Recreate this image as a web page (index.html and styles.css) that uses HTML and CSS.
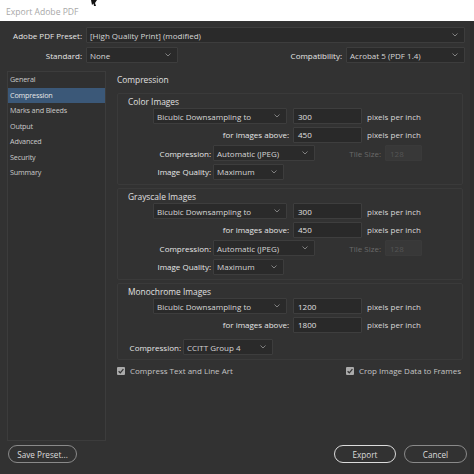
FILE: index.html
```html
<!DOCTYPE html>
<html>
<head>
<meta charset="utf-8">
<link rel="stylesheet" href="styles.css">
</head>
<body>
<div class="titlebar">
  <span class="title">Export Adobe PDF</span>
  <svg class="cursor" width="8" height="6" viewBox="0 0 8 6"><path d="M1 0 L7 0 L5 3 L6 6 L4 6 L3.5 3.5 L2 5 Z" fill="#111"/></svg>
</div>
<div class="dialog">
  <div class="toprow">
    <span class="lbl lbl-top">Adobe PDF Preset:</span>
    <div class="sel sel-grow"><span>[High Quality Print] (modified)</span><svg class="chev" width="6" height="4" viewBox="0 0 6 4"><polyline points="0.5,0.5 3,3 5.5,0.5" fill="none" stroke="#8a8a8a" stroke-width="0.9"/></svg></div>
  </div>
  <div class="toprow row2">
    <span class="lbl lbl-top">Standard:</span>
    <div class="sel w-std"><span>None</span><svg class="chev" width="6" height="4" viewBox="0 0 6 4"><polyline points="0.5,0.5 3,3 5.5,0.5" fill="none" stroke="#8a8a8a" stroke-width="0.9"/></svg></div>
    <span class="spacer"></span>
    <span class="lbl">Compatibility:</span>
    <div class="sel w-compat"><span>Acrobat 5 (PDF 1.4)</span><svg class="chev" width="6" height="4" viewBox="0 0 6 4"><polyline points="0.5,0.5 3,3 5.5,0.5" fill="none" stroke="#8a8a8a" stroke-width="0.9"/></svg></div>
  </div>

  <div class="main">
    <ul class="nav">
      <li>General</li>
      <li class="active">Compression</li>
      <li>Marks and Bleeds</li>
      <li>Output</li>
      <li>Advanced</li>
      <li>Security</li>
      <li>Summary</li>
    </ul>
    <div class="content">
      <div class="heading">Compression</div>

      <div class="group">
        <div class="glabel">Color Images</div>
        <div class="frow">
          <div class="sel w-samp ml-samp"><span>Bicubic Downsampling to</span><svg class="chev" width="6" height="4" viewBox="0 0 6 4"><polyline points="0.5,0.5 3,3 5.5,0.5" fill="none" stroke="#8a8a8a" stroke-width="0.9"/></svg></div>
          <div class="inp g6">300</div>
          <span class="unit">pixels per inch</span>
        </div>
        <div class="frow">
          <span class="lbl w-above">for images above:</span>
          <div class="inp">450</div>
          <span class="unit">pixels per inch</span>
        </div>
        <div class="frow">
          <span class="lbl w-lab">Compression:</span>
          <div class="sel w-comp g2"><span>Automatic (JPEG)</span><svg class="chev" width="6" height="4" viewBox="0 0 6 4"><polyline points="0.5,0.5 3,3 5.5,0.5" fill="none" stroke="#8a8a8a" stroke-width="0.9"/></svg></div>
          <span class="lbl dis w-tile">Tile Size:</span>
          <div class="inp inp-dis">128</div>
        </div>
        <div class="frow">
          <span class="lbl w-lab">Image Quality:</span>
          <div class="sel w-qual g2"><span>Maximum</span><svg class="chev" width="6" height="4" viewBox="0 0 6 4"><polyline points="0.5,0.5 3,3 5.5,0.5" fill="none" stroke="#8a8a8a" stroke-width="0.9"/></svg></div>
        </div>
      </div>

      <div class="group">
        <div class="glabel">Grayscale Images</div>
        <div class="frow">
          <div class="sel w-samp ml-samp"><span>Bicubic Downsampling to</span><svg class="chev" width="6" height="4" viewBox="0 0 6 4"><polyline points="0.5,0.5 3,3 5.5,0.5" fill="none" stroke="#8a8a8a" stroke-width="0.9"/></svg></div>
          <div class="inp g6">300</div>
          <span class="unit">pixels per inch</span>
        </div>
        <div class="frow">
          <span class="lbl w-above">for images above:</span>
          <div class="inp">450</div>
          <span class="unit">pixels per inch</span>
        </div>
        <div class="frow">
          <span class="lbl w-lab">Compression:</span>
          <div class="sel w-comp g2"><span>Automatic (JPEG)</span><svg class="chev" width="6" height="4" viewBox="0 0 6 4"><polyline points="0.5,0.5 3,3 5.5,0.5" fill="none" stroke="#8a8a8a" stroke-width="0.9"/></svg></div>
          <span class="lbl dis w-tile">Tile Size:</span>
          <div class="inp inp-dis">128</div>
        </div>
        <div class="frow">
          <span class="lbl w-lab">Image Quality:</span>
          <div class="sel w-qual g2"><span>Maximum</span><svg class="chev" width="6" height="4" viewBox="0 0 6 4"><polyline points="0.5,0.5 3,3 5.5,0.5" fill="none" stroke="#8a8a8a" stroke-width="0.9"/></svg></div>
        </div>
      </div>

      <div class="group">
        <div class="glabel">Monochrome Images</div>
        <div class="frow">
          <div class="sel w-samp ml-samp"><span>Bicubic Downsampling to</span><svg class="chev" width="6" height="4" viewBox="0 0 6 4"><polyline points="0.5,0.5 3,3 5.5,0.5" fill="none" stroke="#8a8a8a" stroke-width="0.9"/></svg></div>
          <div class="inp g6">1200</div>
          <span class="unit">pixels per inch</span>
        </div>
        <div class="frow">
          <span class="lbl w-above">for images above:</span>
          <div class="inp">1800</div>
          <span class="unit">pixels per inch</span>
        </div>
        <div class="frow mono-comp">
          <span class="lbl w-mlab">Compression:</span>
          <div class="sel w-ccitt g2"><span>CCITT Group 4</span><svg class="chev" width="6" height="4" viewBox="0 0 6 4"><polyline points="0.5,0.5 3,3 5.5,0.5" fill="none" stroke="#8a8a8a" stroke-width="0.9"/></svg></div>
        </div>
      </div>

      <div class="checks">
        <label class="chk"><span class="box"><svg width="8" height="8" viewBox="0 0 8 8"><polyline points="1.6,4.2 3.3,5.8 6.4,2.2" fill="none" stroke="#333" stroke-width="1.3"/></svg></span>Compress Text and Line Art</label>
        <label class="chk chk-right"><span class="box"><svg width="8" height="8" viewBox="0 0 8 8"><polyline points="1.6,4.2 3.3,5.8 6.4,2.2" fill="none" stroke="#333" stroke-width="1.3"/></svg></span>Crop Image Data to Frames</label>
      </div>
    </div>
  </div>

  <div class="footer">
    <button class="btn">Save Preset...</button>
    <span class="spacer"></span>
    <button class="btn btn-primary">Export</button>
    <button class="btn btn-cancel">Cancel</button>
  </div>
</div>
</body>
</html>
```
FILE: styles.css
```css
* { box-sizing: border-box; }
html, body {
  margin: 0;
  padding: 0;
  width: 474px;
  height: 474px;
  overflow: hidden;
  background: #ffffff;
  font-family: "Open Sans", "Noto Sans", "Liberation Sans", sans-serif;
  font-size: 8px;
}
.titlebar {
  position: relative;
  height: 21px;
  background: #ffffff;
  padding-left: 6px;
  padding-top: 2px;
  display: flex;
  align-items: center;
}
.title {
  color: #a8a8a8;
  font-size: 8.6px;
}
.cursor {
  position: absolute;
  left: 90px;
  top: 0;
}
.dialog {
  height: 453px;
  background: #323232;
  padding: 6px 9px 0 7px;
  display: flex;
  flex-direction: column;
  box-shadow: inset -4px 0 0 #2d2d2d;
}
.toprow {
  display: flex;
  align-items: center;
  height: 16px;
}
.row2 { margin-top: 4px; }
.lbl {
  color: #e6e6e6;
  white-space: nowrap;
  text-align: right;
  flex: none;
}
.lbl-top {
  width: 75px;
  margin-right: 4px;
}
.spacer { flex: 1; }
.sel {
  height: 16px;
  background: #2a2a2a;
  border: 1px solid #3d3d3d;
  border-radius: 1px;
  display: flex;
  align-items: center;
  justify-content: space-between;
  padding: 0 6px 0 3px;
  color: #d6d6d6;
  white-space: nowrap;
  flex: none;
}
.sel-grow { flex: 1; }
.chev { flex: none; }
.w-std { width: 92px; }
.w-compat { width: 119px; margin-left: 4px; }

.main {
  display: flex;
  margin-top: 8px;
  height: 370px;
}
.nav {
  list-style: none;
  margin: 0;
  padding: 0;
  width: 99px;
  flex: none;
  border: 1px solid #3c3c3c;
  background: #303030;
}
.nav li {
  height: 15.5px;
  line-height: 15.5px;
  padding-left: 2px;
  color: #cacaca;
  font-size: 7.2px;
  letter-spacing: -0.15px;
}
.nav li.active {
  background: #3b5878;
  color: #e6e6e6;
}
.content {
  flex: 1;
  padding: 3px 2px 0 11px;
  display: flex;
  flex-direction: column;
}
.heading {
  color: #e0e0e0;
  font-size: 8.4px;
  line-height: 12px;
  height: 12px;
  margin-bottom: 7px;
}
.group {
  border: 1px solid #3a3a3a;
  border-radius: 2px;
  padding: 2px 0 4px 0;
  display: flex;
  flex-direction: column;
  gap: 2.5px;
  margin-bottom: 3.5px;
}
.glabel {
  color: #e0e0e0;
  font-size: 8.4px;
  line-height: 12px;
  height: 12px;
  padding-left: 10px;
  margin-bottom: -2.5px;
}
.frow {
  display: flex;
  align-items: center;
  height: 16px;
}
.ml-samp { margin-left: 35px; }
.w-samp { width: 134px; }
.g6 { margin-left: 6px; }
.g2 { margin-left: 2px; }
.inp {
  width: 69px;
  height: 16px;
  background: #292929;
  border: 1px solid #3e3e3e;
  border-radius: 1px;
  color: #e0e0e0;
  padding-left: 4px;
  display: flex;
  align-items: center;
  flex: none;
}
.unit {
  color: #d8d8d8;
  margin-left: 5px;
  white-space: nowrap;
}
.w-above { width: 171px; margin-right: 4px; }
.w-lab { width: 93px; }
.w-comp { width: 102px; }
.w-qual { width: 71px; }
.w-tile { width: 66px; margin-right: 4px; }
.dis { color: #6a6a6a; }
.inp-dis {
  width: 37px;
  background: #383838;
  border-color: #3a3a3a;
  color: #555555;
}
.mono-comp { margin-top: 4px; }
.w-mlab { width: 63px; }
.w-ccitt { width: 90px; }

.checks {
  display: flex;
  margin-top: -1px;
  height: 16px;
  align-items: center;
}
.chk {
  display: flex;
  align-items: center;
  color: #c4c4c4;
  white-space: nowrap;
}
.chk-right { margin-left: auto; margin-right: 2px; }
.box {
  width: 8px;
  height: 8px;
  background: #ababab;
  border-radius: 1px;
  margin-right: 5px;
  display: flex;
}
.footer {
  display: flex;
  align-items: center;
  margin-top: 4px;
  padding-left: 1px;
  margin-right: -2px;
}
.btn {
  font-family: "Open Sans", "Noto Sans", "Liberation Sans", sans-serif;
  font-size: 8.2px;
  height: 18px;
  border-radius: 9px;
  background: transparent;
  border: 1px solid #8a8a8a;
  color: #dcdcdc;
  padding: 0;
  width: 69px;
}
.btn-primary {
  width: 62px;
  border: 1.5px solid #dcdcdc;
}
.btn-cancel {
  width: 63px;
  margin-left: 8px;
}
```
